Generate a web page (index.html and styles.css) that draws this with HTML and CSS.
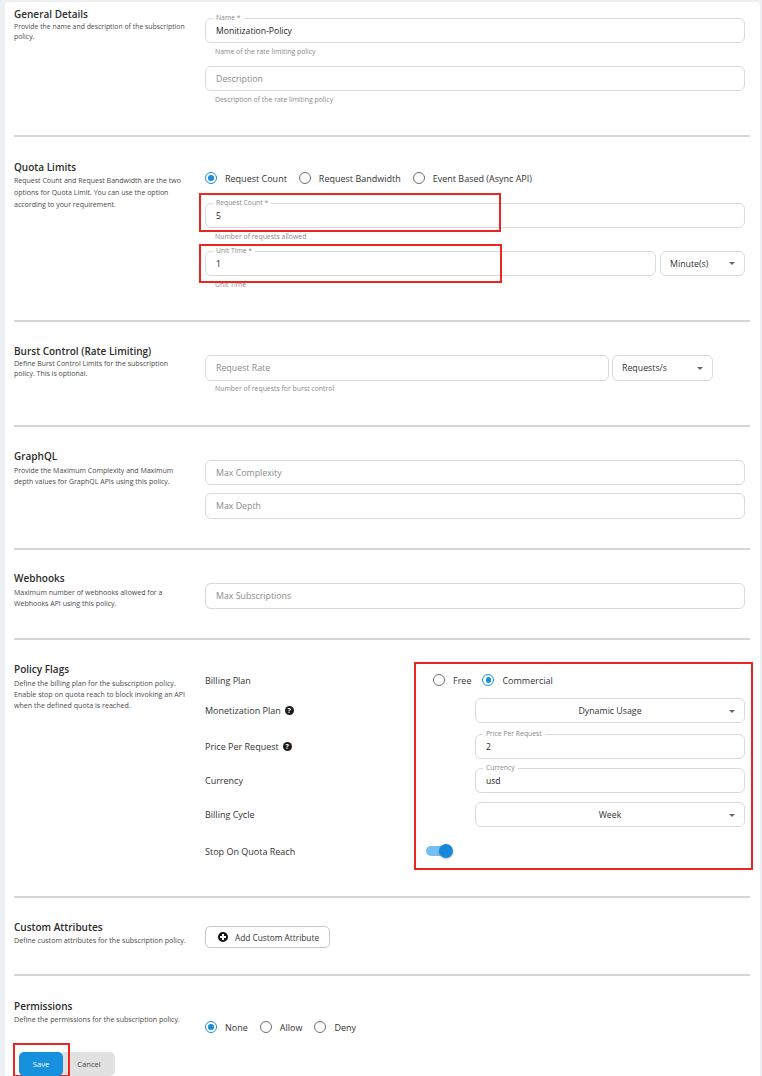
FILE: index.html
```html
<!DOCTYPE html>
<html>
<head>
<meta charset="utf-8">
<link rel="stylesheet" href="styles.css">
</head>
<body>
<div class="card">

  <div class="section s1">
    <div class="left">
      <div class="title">General Details</div>
      <div class="desc">Provide the name and description of the subscription policy.</div>
    </div>
    <div class="right">
      <div class="field filled"><span class="flabel">Name *</span>Monitization-Policy</div>
      <div class="helper">Name of the rate limiting policy</div>
      <div class="field gap9"><span class="ph">Description</span></div>
      <div class="helper">Description of the rate limiting policy</div>
    </div>
  </div>

  <div class="section s2">
    <div class="left">
      <div class="title">Quota Limits</div>
      <div class="desc">Request Count and Request Bandwidth are the two options for Quota Limit. You can use the option according to your requirement.</div>
    </div>
    <div class="right">
      <div class="radios">
        <label class="radio on"><span class="dot"></span>Request Count</label>
        <label class="radio"><span class="dot"></span>Request Bandwidth</label>
        <label class="radio"><span class="dot"></span>Event Based (Async API)</label>
      </div>
      <div class="marked m1">
        <div class="field filled"><span class="flabel">Request Count *</span>5</div>
        <div class="redbox rb1"></div>
      </div>
      <div class="helper">Number of requests allowed</div>
      <div class="marked m2">
        <div class="row">
          <div class="field filled grow"><span class="flabel">Unit Time *</span>1</div>
          <div class="select w85"><span>Minute(s)</span><span class="caret"></span></div>
        </div>
        <div class="redbox rb2"></div>
      </div>
      <div class="helper">Unit Time</div>
    </div>
  </div>

  <div class="section s3">
    <div class="left">
      <div class="title">Burst Control (Rate Limiting)</div>
      <div class="desc">Define Burst Control Limits for the subscription policy. This is optional.</div>
    </div>
    <div class="right">
      <div class="row burst">
        <div class="field grow h26"><span class="ph">Request Rate</span></div>
        <div class="select w101 h26"><span>Requests/s</span><span class="caret"></span></div>
      </div>
      <div class="helper tight">Number of requests for burst control</div>
    </div>
  </div>

  <div class="section s4">
    <div class="left">
      <div class="title">GraphQL</div>
      <div class="desc">Provide the Maximum Complexity and Maximum depth values for GraphQL APIs using this policy.</div>
    </div>
    <div class="right">
      <div class="field"><span class="ph">Max Complexity</span></div>
      <div class="field gap8 h26"><span class="ph">Max Depth</span></div>
    </div>
  </div>

  <div class="section s5">
    <div class="left">
      <div class="title">Webhooks</div>
      <div class="desc">Maximum number of webhooks allowed for a Webhooks API using this policy.</div>
    </div>
    <div class="right">
      <div class="field h26"><span class="ph">Max Subscriptions</span></div>
    </div>
  </div>

  <div class="section s6">
    <div class="left">
      <div class="title">Policy Flags</div>
      <div class="desc">Define the billing plan for the subscription policy. Enable stop on quota reach to block invoking an API when the defined quota is reached.</div>
    </div>
    <div class="right flags">
      <div class="flabel-row r1">Billing Plan</div>
      <div class="fctl r1">
        <div class="radios inset">
          <label class="radio"><span class="dot"></span>Free</label>
          <label class="radio on"><span class="dot"></span>Commercial</label>
        </div>
      </div>

      <div class="flabel-row">Monetization Plan <span class="help">?</span></div>
      <div class="fctl"><div class="select center"><span>Dynamic Usage</span><span class="caret"></span></div></div>

      <div class="flabel-row shift">Price Per Request <span class="help">?</span></div>
      <div class="fctl shift"><div class="field filled"><span class="flabel">Price Per Request</span>2</div></div>

      <div class="flabel-row">Currency</div>
      <div class="fctl"><div class="field filled"><span class="flabel">Currency</span>usd</div></div>

      <div class="flabel-row">Billing Cycle</div>
      <div class="fctl"><div class="select center"><span>Week</span><span class="caret"></span></div></div>

      <div class="flabel-row r6">Stop On Quota Reach</div>
      <div class="fctl r6"><span class="toggle"><span class="knob"></span></span></div>

      <div class="redbox rb3"></div>
    </div>
  </div>

  <div class="section s7">
    <div class="left">
      <div class="title">Custom Attributes</div>
      <div class="desc">Define custom attributes for the subscription policy.</div>
    </div>
    <div class="right">
      <button class="attr-btn"><span class="plus"></span>Add Custom Attribute</button>
    </div>
  </div>

  <div class="section s8">
    <div class="left">
      <div class="title">Permissions</div>
      <div class="desc">Define the permissions for the subscription policy.</div>
    </div>
    <div class="right">
      <div class="radios">
        <label class="radio on"><span class="dot"></span>None</label>
        <label class="radio"><span class="dot"></span>Allow</label>
        <label class="radio"><span class="dot"></span>Deny</label>
      </div>
    </div>
  </div>

  <div class="actions">
    <button class="btn save">Save</button>
    <button class="btn cancel">Cancel</button>
    <div class="redbox rb4"></div>
  </div>

</div>
</body>
</html>
```
FILE: styles.css
```css
* { box-sizing: border-box; }
html, body {
  margin: 0;
  padding: 0;
  height: 1076px;
  overflow: hidden;
  background: #eef1f4;
  font-family: "Open Sans", "Liberation Sans", sans-serif;
  color: #333;
}
.card {
  margin: 2px 2px 0 5px;
  background: #fff;
  border-radius: 4px 4px 0 0;
  height: 1074px;
  overflow: hidden;
}
.section {
  display: flex;
  margin: 0 10px 0 9px;
  border-bottom: 2px solid #d4d6d8;
}
.left { width: 191px; flex: none; }
.right { flex: 1; padding-right: 5px; position: relative; }

.title {
  font-size: 10px;
  font-weight: 600;
  line-height: 14px;
  color: #2c2c2c;
}
.desc {
  font-size: 6.9px;
  line-height: 10px;
  color: #4a4a4a;
  margin-top: 1px;
  width: 178px;
}

.s1 { height: 135px; padding-top: 5px; }
.s1 .right { margin-top: 11px; }
.s2 { height: 185px; padding-top: 23px; }
.s2 .desc { line-height: 12px; font-size: 7px; }
.s2 .right { margin-top: 11px; }
.s3 { height: 105px; padding-top: 22px; }
.s3 .desc { width: 174px; font-size: 7px; }
.s3 .right { margin-top: 11px; }
.s4 { height: 123px; padding-top: 22px; }
.s4 .desc { line-height: 11px; margin-top: 2px; font-size: 7px; }
.s4 .right { margin-top: 11px; }
.s5 { height: 90px; padding-top: 21px; }
.s5 .desc { line-height: 11px; margin-top: 2px; font-size: 7px; }
.s5 .right { margin-top: 12px; }
.s6 { height: 258px; padding-top: 22px; }
.s6 .desc { line-height: 11px; margin-top: 2px; font-size: 7.1px; width: 181px; }
.s6 .right { margin-top: 8px; }
.s7 { height: 78px; padding-top: 22px; }
.s7 .desc { width: 191px; font-size: 7.1px; }
.s7 .right { margin-top: 5px; }
.s8 { border-bottom: none; padding-top: 23px; }
.s8 .desc { width: 191px; font-size: 7.1px; }
.s8 .right { margin-top: 21px; }

/* fields */
.field {
  position: relative;
  height: 25px;
  border: 1px solid #d9d9d9;
  border-radius: 6px;
  padding: 0 10px;
  display: flex;
  align-items: center;
  font-size: 8.6px;
  color: #222;
}
.field.h26, .select.h26 { height: 26px; }
.field.gap9 { margin-top: 9px; }
.field.gap8 { margin-top: 8px; }
.ph { color: #8a8a8a; font-size: 8.8px; }
.flabel {
  position: absolute;
  top: -5px;
  left: 7px;
  padding: 0 3px;
  background: #fff;
  font-size: 6.8px;
  line-height: 8px;
  color: #8a8a8a;
}
.helper {
  font-size: 6.9px;
  line-height: 10px;
  color: #8a8a8a;
  margin: 4px 0 0 10px;
}
.helper.tight { margin-top: 3px; }
.s1 .helper + .field { margin-top: 9px; }
.s2 .helper + .marked { margin-top: 9px; }

.row { display: flex; gap: 4px; }
.grow { flex: 1; }
.row.burst { width: 508px; gap: 3px; }

.select {
  height: 25px;
  border: 1px solid #d9d9d9;
  border-radius: 6px;
  padding: 0 9px;
  display: flex;
  align-items: center;
  justify-content: space-between;
  font-size: 8.8px;
  color: #333;
  position: relative;
}
.select.w85 { width: 85px; flex: none; }
.select.w101 { width: 101px; flex: none; }
.select.center { justify-content: center; }
.caret {
  width: 0; height: 0;
  border-left: 3px solid transparent;
  border-right: 3px solid transparent;
  border-top: 3px solid #666;
}
.select.center .caret { position: absolute; right: 9px; top: 11px; }

/* radios */
.radios { display: flex; align-items: center; height: 14px; gap: 12px; }
.radio {
  display: flex;
  align-items: center;
  gap: 8px;
  font-size: 9px;
  color: #333;
}
.dot {
  width: 12px; height: 12px;
  border: 1.4px solid #6e6e6e;
  border-radius: 50%;
  position: relative;
  flex: none;
}
.radio.on .dot { border-color: #1a8fd9; }
.radio.on .dot::after {
  content: "";
  position: absolute;
  left: 50%; top: 50%;
  width: 5.5px; height: 5.5px;
  margin: -2.75px 0 0 -2.75px;
  border-radius: 50%;
  background: #1a8fd9;
}
.s2 .marked.m1 { margin-top: 18px; }

.marked { position: relative; }
.redbox {
  position: absolute;
  border: 2.5px solid #ec2520;
  pointer-events: none;
}
.rb1 { left: -6px; top: -10px; width: 302px; height: 39px; }
.rb2 { left: -6px; top: -7px; width: 303px; height: 39px; }
.rb3 { left: 209px; top: -8px; width: 339px; height: 208px; }
.rb4 { left: -6px; top: -9px; width: 57px; height: 34px; }

/* policy flags grid */
.flags {
  display: grid;
  grid-template-columns: 221px 1fr;
  row-gap: 9px;
  align-items: center;
  align-content: start;
  align-self: flex-start;
}
.flabel-row {
  font-size: 9px;
  color: #333;
  display: flex;
  align-items: center;
  gap: 4px;
  height: 25px;
}
.flabel-row.shift, .fctl.shift { margin-top: 2px; }
.flabel-row.r1, .fctl.r1 { height: 20px; margin-bottom: -1px; }
.flabel-row.r6, .fctl.r6 { height: 20px; margin-top: 5px; }
.fctl { padding-left: 49px; }
.fctl.r1 { padding-left: 7px; display: flex; align-items: center; }
.fctl.r6 { padding-left: 0; display: flex; align-items: center; }
.radios.inset { gap: 11px; }
.help {
  width: 9px; height: 9px;
  border-radius: 50%;
  background: #1c1c1c;
  color: #fff;
  font-size: 7px;
  font-weight: 700;
  line-height: 9px;
  text-align: center;
  display: inline-block;
}
.toggle {
  position: relative;
  width: 25px;
  height: 10px;
  border-radius: 5px;
  background: #74bff0;
  display: inline-block;
}
.knob {
  position: absolute;
  right: -2px;
  top: -2px;
  width: 14px; height: 14px;
  border-radius: 50%;
  background: #1687d9;
  box-shadow: 0 1px 2px rgba(0,0,0,0.25);
}

/* buttons */
.attr-btn {
  height: 22px;
  border: 1px solid #c9c9c9;
  border-radius: 5px;
  background: #fff;
  padding: 0 10px 0 12px;
  display: inline-flex;
  align-items: center;
  gap: 7px;
  font-family: inherit;
  font-size: 8.3px;
  color: #333;
}
.plus {
  width: 10px; height: 10px;
  border-radius: 50%;
  background: #111;
  position: relative;
}
.plus::before, .plus::after {
  content: "";
  position: absolute;
  background: #fff;
  left: 50%; top: 50%;
}
.plus::before { width: 6px; height: 1.6px; margin: -0.8px 0 0 -3px; }
.plus::after { width: 1.6px; height: 6px; margin: -3px 0 0 -0.8px; }

.actions {
  position: relative;
  display: flex;
  margin: 18px 0 0 14px;
}
.btn {
  height: 24px;
  border: none;
  border-radius: 5px;
  font-family: inherit;
  font-size: 7.6px;
  padding: 0;
}
.btn.save { width: 44px; background: #1791dd; color: #fff; position: relative; z-index: 1; }
.btn.cancel { width: 56px; margin-left: -4px; padding-left: 4px; background: #e1e1e1; color: #444; }
```
